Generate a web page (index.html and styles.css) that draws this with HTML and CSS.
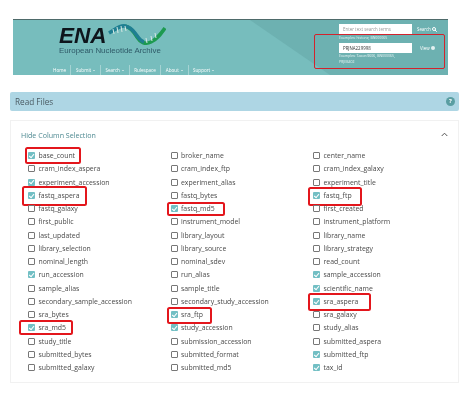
FILE: index.html
```html
<!DOCTYPE html>
<html lang="en">
<head>
<meta charset="utf-8">
<title>Read Files</title>
<link rel="stylesheet" href="styles.css">
</head>
<body>
<div class="page">
  <header class="masthead">
    <svg class="shade" viewBox="0 0 435 56" preserveAspectRatio="none" aria-hidden="true"><polygon points="237,0 435,0 435,56 317,56" fill="#6db1b1"/></svg>
    <div class="brand-col">
      <div class="brand">
        <div class="logo-row">
          <span class="ena">ENA</span>
          <svg class="helix" width="58" height="22" viewBox="0 0 58 22" aria-hidden="true">
            <path d="M17 2C22 3 26 8 29 13S37 21 43 18 52 11 57 4" fill="none" stroke="#1d9a50" stroke-width="3.600"/>
            <path d="M1 9C8 5 12 1 17 2S24 5 27 9 32 17 36 18" fill="none" stroke="#1f7f92" stroke-width="3.600"/>
            <path d="M5 5l1 5M9 3l1 6M13 2l1 6M17 2l1 5M38 14l1 5M43 12l1 5M47 9l1 5" stroke="#d5e8e4" stroke-width="1"/>
          </svg>
        </div>
        <div class="ena-name">European Nucleotide Archive</div>
      </div>
      <nav class="nav">
        <a class="first">Home</a>
        <a>Submit <i class="caret"></i></a>
        <a>Search <i class="caret"></i></a>
        <a>Rulespace</a>
        <a>About <i class="caret"></i></a>
        <a>Support <i class="caret"></i></a>
      </nav>
    </div>
    <div class="search-col">
      <div class="search-row">
        <span class="field muted">Enter text search terms</span>
        <span class="go">Search <svg width="5" height="5" viewBox="0 0 10 10" aria-hidden="true"><circle cx="4" cy="4" r="3" fill="none" stroke="#fff" stroke-width="2"/><path d="M6 6l3.500 3.500" stroke="#fff" stroke-width="2"/></svg></span>
      </div>
      <div class="hint">Examples: histone, BN000065</div>
      <div class="search-row second">
        <span class="field">PRJNA229998</span>
        <span class="go go-view">View <i class="dot"></i></span>
      </div>
      <div class="hint tight">Examples: Taxon:9606, BN000065,<br>PRJEB402</div>
      <div class="ring"></div>
    </div>
  </header>

  <div class="titlebar">
    <span>Read Files</span>
    <span class="help">?</span>
  </div>

  <section class="card">
    <div class="card-head">
      <span class="toggle">Hide Column Selection</span>
      <svg class="chev" width="7" height="5" viewBox="0 0 7 5" aria-hidden="true"><path d="M.7 4L3.500 1.200 6.300 4" fill="none" stroke="#555" stroke-width="1"/></svg>
    </div>
    <div class="grid">
      <label class="item on"><i class="box"></i>base_count<b class="mark m-base"></b></label>
      <label class="item"><i class="box"></i>broker_name</label>
      <label class="item"><i class="box"></i>center_name</label>
      <label class="item"><i class="box"></i>cram_index_aspera</label>
      <label class="item"><i class="box"></i>cram_index_ftp</label>
      <label class="item"><i class="box"></i>cram_index_galaxy</label>
      <label class="item on"><i class="box"></i>experiment_accession</label>
      <label class="item"><i class="box"></i>experiment_alias</label>
      <label class="item"><i class="box"></i>experiment_title</label>
      <label class="item on"><i class="box"></i>fastq_aspera<b class="mark m-aspera"></b></label>
      <label class="item"><i class="box"></i>fastq_bytes</label>
      <label class="item on"><i class="box"></i>fastq_ftp<b class="mark m-ftp"></b></label>
      <label class="item"><i class="box"></i>fastq_galaxy</label>
      <label class="item on"><i class="box"></i>fastq_md5<b class="mark m-md5"></b></label>
      <label class="item"><i class="box"></i>first_created</label>
      <label class="item"><i class="box"></i>first_public</label>
      <label class="item"><i class="box"></i>instrument_model</label>
      <label class="item"><i class="box"></i>instrument_platform</label>
      <label class="item"><i class="box"></i>last_updated</label>
      <label class="item"><i class="box"></i>library_layout</label>
      <label class="item"><i class="box"></i>library_name</label>
      <label class="item"><i class="box"></i>library_selection</label>
      <label class="item"><i class="box"></i>library_source</label>
      <label class="item"><i class="box"></i>library_strategy</label>
      <label class="item"><i class="box"></i>nominal_length</label>
      <label class="item"><i class="box"></i>nominal_sdev</label>
      <label class="item"><i class="box"></i>read_count</label>
      <label class="item on"><i class="box"></i>run_accession</label>
      <label class="item"><i class="box"></i>run_alias</label>
      <label class="item on"><i class="box"></i>sample_accession</label>
      <label class="item"><i class="box"></i>sample_alias</label>
      <label class="item"><i class="box"></i>sample_title</label>
      <label class="item on"><i class="box"></i>scientific_name</label>
      <label class="item"><i class="box"></i>secondary_sample_accession</label>
      <label class="item"><i class="box"></i>secondary_study_accession</label>
      <label class="item on"><i class="box"></i>sra_aspera<b class="mark m-sra-aspera"></b></label>
      <label class="item"><i class="box"></i>sra_bytes</label>
      <label class="item on"><i class="box"></i>sra_ftp<b class="mark m-sra-ftp"></b></label>
      <label class="item"><i class="box"></i>sra_galaxy</label>
      <label class="item on"><i class="box"></i>sra_md5<b class="mark m-sra-md5"></b></label>
      <label class="item on"><i class="box"></i>study_accession</label>
      <label class="item"><i class="box"></i>study_alias</label>
      <label class="item"><i class="box"></i>study_title</label>
      <label class="item"><i class="box"></i>submission_accession</label>
      <label class="item"><i class="box"></i>submitted_aspera</label>
      <label class="item"><i class="box"></i>submitted_bytes</label>
      <label class="item"><i class="box"></i>submitted_format</label>
      <label class="item on"><i class="box"></i>submitted_ftp</label>
      <label class="item"><i class="box"></i>submitted_galaxy</label>
      <label class="item"><i class="box"></i>submitted_md5</label>
      <label class="item on"><i class="box"></i>tax_id</label>
    </div>
  </section>
</div>
</body>
</html>
```

FILE: styles.css
```css
* { box-sizing: border-box; }
html, body { margin: 0; background: #fff; }
body { width: 474px; height: 412px; overflow: hidden; font-family: "Open Sans", "Liberation Sans", sans-serif; color: #444; }
.page { padding: 19px 15px 0 10px; filter: blur(.35px); }

.masthead { position: relative; margin-left: 3px; width: 435px; height: 56px; background: #77bdbd; border-top: 1px solid #4e6a6a; display: flex; }
.shade { position: absolute; inset: 0; width: 100%; height: 100%; }
.brand-col { position: relative; padding-left: 40px; display: flex; flex-direction: column; }
.brand { padding: 7px 0 0 6px; }
.logo-row { display: flex; align-items: flex-start; height: 18px; }
.ena { font: italic 700 22.500px/18px "Liberation Sans", sans-serif; color: #0e151c; }
.helix { margin: -3px 0 0 1px; flex: none; }
.ena-name { font: 400 7.900px/10px "Liberation Sans", sans-serif; color: #2f5a68; margin-top: 1px; white-space: nowrap; }
.nav { display: flex; margin: 9px 0 0 -4.500px; font-size: 4.600px; line-height: 10px; color: #fff; }
.nav a { padding: 0 4.500px; border-left: 1px solid #a5d3d3; white-space: nowrap; }
.nav a.first { border-left: 0; }
.caret { display: inline-block; width: 0; height: 0; margin-left: 1px; vertical-align: middle; border: 1.500px solid transparent; border-top-color: #fff; border-bottom: 0; }

.search-col { position: relative; width: 109px; margin-left: auto; margin-right: 0; padding-top: 4px; }
.search-row { display: flex; align-items: center; gap: 5px; }
.search-row.second { margin-top: 2px; }
.field { width: 73px; height: 10px; padding-left: 4px; background: #fff; font-size: 4.400px; line-height: 10px; color: #333; white-space: nowrap; }
.field.muted { color: #999; }
.go { font-size: 4.400px; color: #fff; display: flex; align-items: center; gap: 1px; }
.go-view { padding-left: 3px; }
.dot { display: inline-block; width: 4px; height: 4px; border-radius: 50%; background: #e3f1f1; }
.hint { font-size: 3.500px; line-height: 6px; color: #e8f4f4; margin-top: 1px; white-space: nowrap; }
.hint.tight { margin-top: 0; }
.ring { position: absolute; left: -25px; right: 3px; top: 14px; height: 35px; border: 1.500px solid #d3222c; border-radius: 2px; }

.titlebar { margin-top: 17px; height: 19px; padding: 0 4px 0 5px; display: flex; align-items: center; justify-content: space-between; background: #aed6e4; border-radius: 2px; font-size: 8.200px; color: #4a5a62; }
.help { width: 9px; height: 9px; border-radius: 50%; background: #5a9ea2; color: #fff; font-weight: 700; font-size: 6px; line-height: 9px; text-align: center; }

.card { margin-top: 9px; height: 263px; border: 1px solid #f1f1f1; }
.card-head { height: 28px; padding: 6px 10px 0 10px; display: flex; justify-content: space-between; align-items: flex-start; }
.toggle { font-size: 7.100px; line-height: 16px; color: #4f8a92; }
.chev { margin-top: 5px; }
.grid { display: grid; grid-template-columns: repeat(3, 142.500px); grid-auto-rows: 13.250px; padding-left: 17px; }
.item { position: relative; display: flex; align-items: center; gap: 3.500px; font: 400 6.900px/13px "Open Sans", sans-serif; color: #4a4a4a; white-space: nowrap; }
.box { flex: none; width: 7px; height: 7px; border: 1px solid #777; border-radius: 1px; background: #fff; }
.item.on .box { border: 0; background: #72bfc4; position: relative; }
.item.on .box::after { content: ""; position: absolute; left: 2.300px; top: .8px; width: 2.300px; height: 4.200px; border: solid #fff; border-width: 0 1px 1px 0; transform: rotate(40deg); }

.mark { position: absolute; border: 2px solid #e3161c; border-radius: 2.500px; }
.m-base { left: -3px; top: -2px; width: 56px; height: 17px; }
.m-aspera { left: -6px; top: -3px; width: 65px; height: 20px; }
.m-md5 { left: -4px; top: -.500px; width: 58px; height: 14px; }
.m-ftp { left: -5px; top: -2px; width: 54px; height: 19px; }
.m-sra-aspera { left: -5px; top: -2px; width: 63px; height: 18px; }
.m-sra-ftp { left: -4px; top: -1px; width: 45px; height: 17px; }
.m-sra-md5 { left: -9px; top: -1px; width: 54px; height: 15px; }
```
